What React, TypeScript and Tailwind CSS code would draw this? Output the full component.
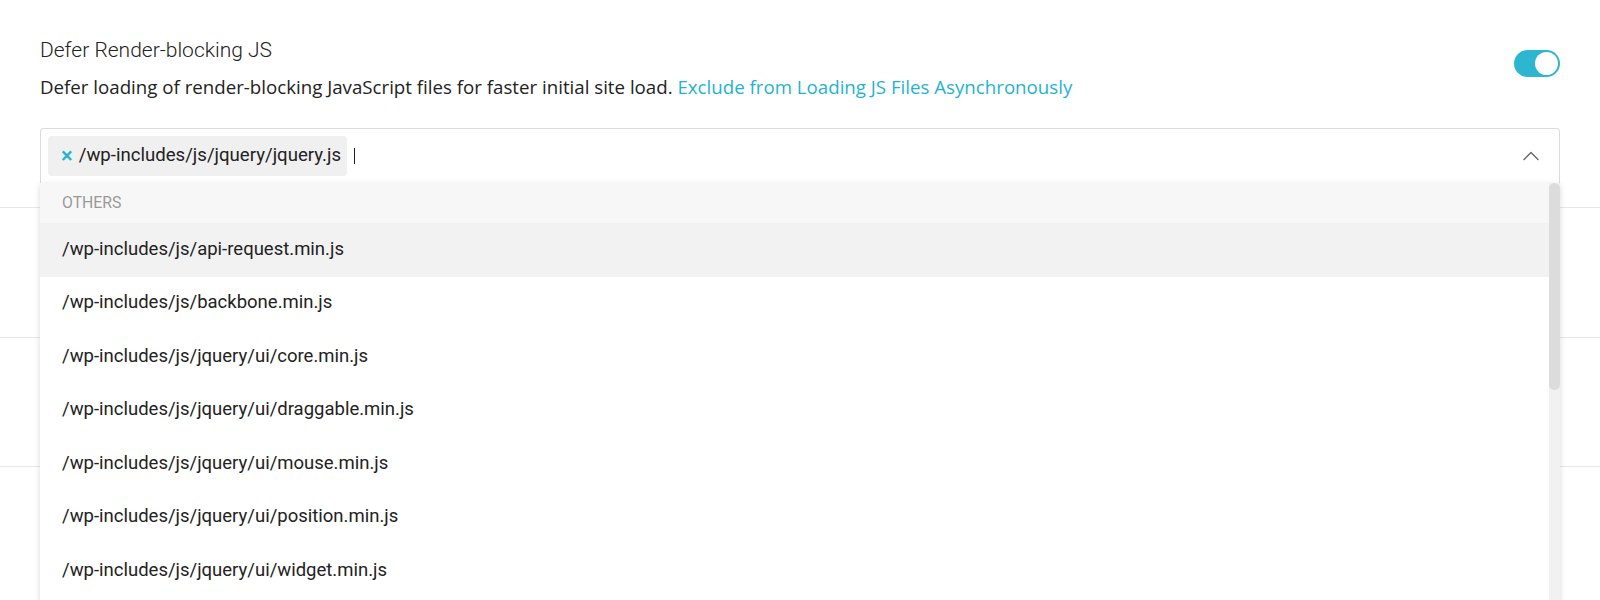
import { ChevronUp } from "lucide-react";

const files = [
  "/wp-includes/js/api-request.min.js",
  "/wp-includes/js/backbone.min.js",
  "/wp-includes/js/jquery/ui/core.min.js",
  "/wp-includes/js/jquery/ui/draggable.min.js",
  "/wp-includes/js/jquery/ui/mouse.min.js",
  "/wp-includes/js/jquery/ui/position.min.js",
  "/wp-includes/js/jquery/ui/widget.min.js",
];

/** Defer JS setting row with its exclude-list multi-select open. */
export default function App() {
  return (
    <div className="relative h-[600px] w-[1600px] overflow-hidden bg-white text-[#222]">
      <section className="border-b border-[#e6e6e6] px-10 pt-9 pb-[24px]">
        <div className="flex items-start">
          <div className="flex-1">
            <h3 className="font-['Roboto',sans-serif] text-[21px] leading-[28px] font-light text-[#222]">
              Defer Render-blocking JS
            </h3>
            <p className="mt-[10px] font-['Open_Sans',sans-serif] text-[18.7px] leading-[26px] text-[#222]">
              Defer loading of render-blocking JavaScript files for faster initial site load.{" "}
              <a href="#" className="text-[#1fb3cf]">Exclude from Loading JS Files Asynchronously</a>
            </p>
          </div>
          <Toggle />
        </div>

        <FileSelect />
      </section>

      <div className="h-[130px] border-b border-[#e6e6e6]" />
      <div className="h-[129px] border-b border-[#e6e6e6]" />
    </div>
  );
}

function Toggle() {
  return (
    <button
      type="button"
      aria-label="Defer render-blocking JS"
      className="mt-[14px] flex h-[27px] w-[46px] items-center justify-end rounded-full bg-[#2db6cf] pr-[2px]"
    >
      <span className="size-[23px] rounded-full bg-white" />
    </button>
  );
}

function FileSelect() {
  return (
    <div className="relative mt-[28px] font-['Roboto',sans-serif]">
      <div className="flex h-[55px] items-center rounded-t-[4px] border border-b-0 border-[#dadada] pr-[14px] pl-[7px]">
        <span className="flex h-10 items-center gap-[6px] rounded-[4px] bg-[#f0f0f0] pr-[6px] pl-[13px]">
          <span className="text-[22px] leading-none font-medium text-[#1fb3cf]">×</span>
          <span className="text-[18.6px] text-[#222]">/wp-includes/js/jquery/jquery.js</span>
        </span>
        <span className="ml-[7px] h-[16px] w-px bg-[#222]" />
        <ChevronUp className="ml-auto size-[28px] text-[#666]" strokeWidth={1.2} />
      </div>

      <div className="absolute top-full right-0 left-0 flex bg-white shadow-[0_2px_6px_rgba(0,0,0,0.15)]">
        <ul className="flex-1 pb-[40px]">
          <li className="flex h-[40px] items-center bg-[#f7f7f7] pl-[22px] text-[15.8px] text-[#999] uppercase">
            Others
          </li>
          {files.map((f, i) => (
            <li
              key={f}
              className={`flex h-[53.5px] items-center pl-[22px] text-[18.5px] text-[#222] ${i === 0 ? "bg-[#f2f2f2]" : ""}`}
            >
              {f}
            </li>
          ))}
        </ul>
        <div className="w-[11px] bg-[#f1f1f1]">
          <div className="h-[207px] rounded-full bg-[#dcdcdc]" />
        </div>
      </div>
    </div>
  );
}
